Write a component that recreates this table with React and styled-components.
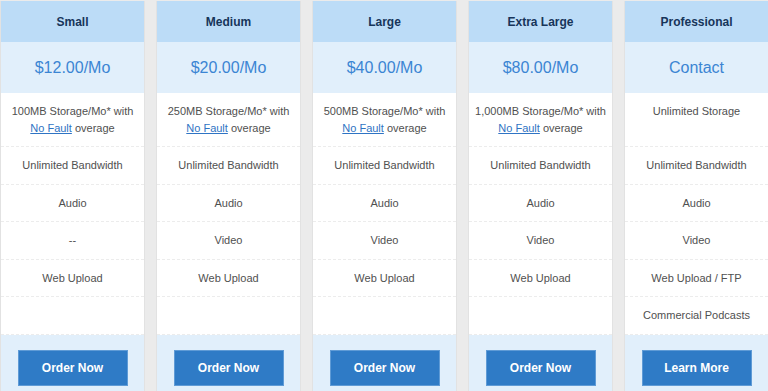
import styled, { createGlobalStyle } from "styled-components"

const plans = [
    {
        name: "Small",
        price: "$12.00/Mo",
        storage: "100MB",
        features: ["Unlimited Bandwidth", "Audio", "--", "Web Upload", ""],
        button: "Order Now",
    },
    {
        name: "Medium",
        price: "$20.00/Mo",
        storage: "250MB",
        features: ["Unlimited Bandwidth", "Audio", "Video", "Web Upload", ""],
        button: "Order Now",
    },
    {
        name: "Large",
        price: "$40.00/Mo",
        storage: "500MB",
        features: ["Unlimited Bandwidth", "Audio", "Video", "Web Upload", ""],
        button: "Order Now",
    },
    {
        name: "Extra Large",
        price: "$80.00/Mo",
        storage: "1,000MB",
        features: ["Unlimited Bandwidth", "Audio", "Video", "Web Upload", ""],
        button: "Order Now",
    },
    {
        name: "Professional",
        price: "Contact",
        features: ["Unlimited Bandwidth", "Audio", "Video", "Web Upload / FTP", "Commercial Podcasts"],
        button: "Learn More",
    },
]

function App(){
    return(
        <>
            <GlobalStyle />
            <Table>
                {plans.map((plan) =>(
                    <Column key={plan.name}>
                        <Title>{plan.name}</Title>
                        <Price>{plan.price}</Price>
                        <StorageRow>
                            {plan.storage ? (
                                <>
                                    {plan.storage} Storage/Mo* with<br />
                                    <FaultLink href="#">No Fault</FaultLink> overage
                                </>
                            ) : "Unlimited Storage"}
                        </StorageRow>
                        {plan.features.map((feature, i) =>(
                            <Row key={i}>{feature}</Row>
                        ))}
                        <Footer>
                            <OrderButton>{plan.button}</OrderButton>
                        </Footer>
                    </Column>
                ))}
            </Table>
        </>
    )
}

export default App


const GlobalStyle = createGlobalStyle`
body{
    margin : 0;
    background : #ebebeb;
    font-family : "Liberation Sans", Arial, sans-serif;
    overflow : hidden;
}
`
const Table = styled.div`
display : flex;
gap : 11px;
padding-top : 1px;
width : 100vw;
overflow : hidden;
`
const Column = styled.div`
flex : 0 0 145px;
display : flex;
flex-direction : column;
background : #fff;
box-sizing : border-box;
border-left : 1px solid #e2e2e2;
border-right : 1px solid #e2e2e2;
`
const Title = styled.div`
height : 41px;
display : flex;
align-items : center;
justify-content : center;
background : #bcdcf7;
color : #17355a;
font-size : 12px;
font-weight : bold;
`
const Price = styled.div`
height : 51px;
display : flex;
align-items : center;
justify-content : center;
background : #e1effb;
color : #3b85d3;
font-size : 16px;
`
const StorageRow = styled.div`
height : 54px;
box-sizing : border-box;
padding : 10px 6px 0;
text-align : center;
font-size : 11px;
line-height : 17px;
color : #505050;
border-bottom : 1px dashed #ececec;
`
const FaultLink = styled.a`
color : #2f74c4;
text-decoration : underline;
`
const Row = styled.div`
height : 37.5px;
box-sizing : border-box;
display : flex;
align-items : center;
justify-content : center;
font-size : 11px;
color : #505050;
border-bottom : 1px dashed #ececec;
`
const Footer = styled.div`
flex : 1;
background : #e1effb;
padding : 15px 0 0;
display : flex;
justify-content : center;
min-height : 60px;
`
const OrderButton = styled.button`
width : 110px;
height : 36px;
background : #2f7bc6;
border : 1px solid #5f9bd6;
color : #fff;
font-family : inherit;
font-size : 12px;
font-weight : bold;
cursor : pointer;
`
